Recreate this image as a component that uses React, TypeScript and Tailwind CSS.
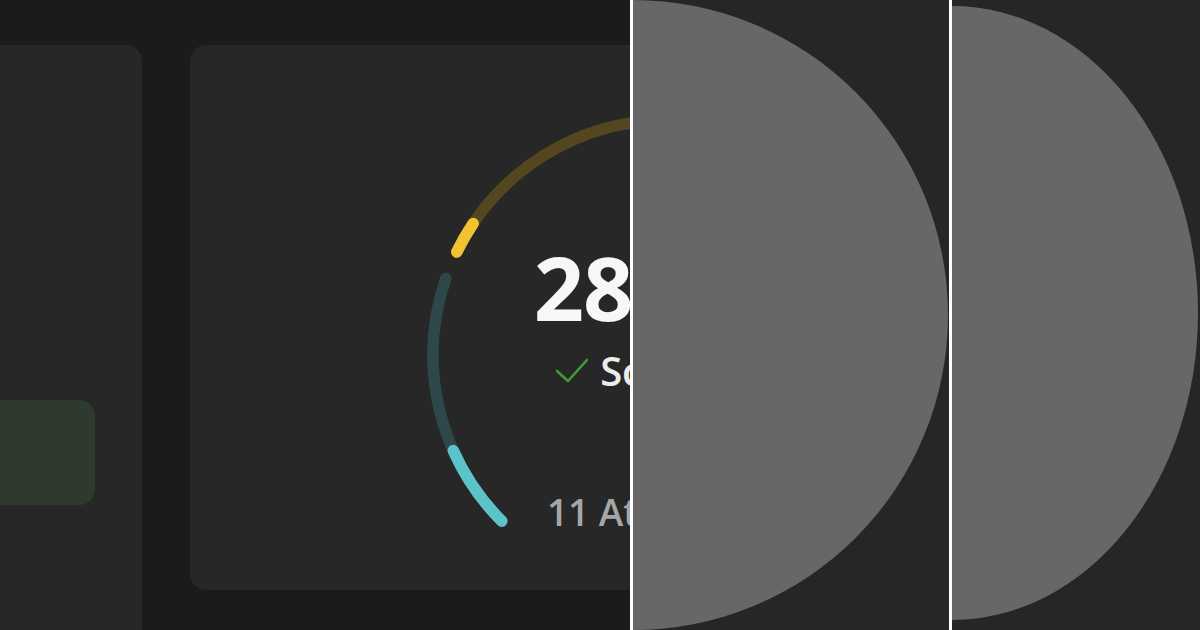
import React from 'react';

const CX = 245;
const CY = 245;
const R = 235;

// angle in degrees, clockwise from 12 o'clock
const pt = (deg: number) => {
  const a = (deg * Math.PI) / 180;
  return [CX + R * Math.sin(a), CY - R * Math.cos(a)];
};

const arc = (from: number, to: number) => {
  const [x1, y1] = pt(from);
  const [x2, y2] = pt(to);
  const large = to - from > 180 ? 1 : 0;
  return `M ${x1.toFixed(2)} ${y1.toFixed(2)} A ${R} ${R} 0 ${large} 1 ${x2.toFixed(2)} ${y2.toFixed(2)}`;
};

const SEGMENTS = [
  { from: -135, to: -71, value: -114, track: '#2e474b', fill: '#5cc3ca' },
  { from: -64, to: 64, value: -56, track: '#54461f', fill: '#f2c230' },
  { from: 71, to: 135, value: 80, track: '#4a2c2c', fill: '#e0605a' },
];

const Gauge: React.FC = () => (
  <div className="relative w-[490px] h-[490px]">
    <svg width="490" height="490" viewBox="0 0 490 490" className="absolute inset-0">
      {SEGMENTS.map((s, i) => (
        <g key={i}>
          <path d={arc(s.from, s.to)} fill="none" stroke={s.track} strokeWidth={11.5} strokeLinecap="round" />
          <path d={arc(s.from, s.value)} fill="none" stroke={s.fill} strokeWidth={11.5} strokeLinecap="round" />
        </g>
      ))}
    </svg>

    <div className="absolute inset-0 flex flex-col items-center pt-[133px] font-['Open_Sans',sans-serif]">
      <div className="pl-[20px] text-[88px] leading-none font-bold text-[#f7f7f7] tracking-[-1px]">28 min</div>
      <div className="mt-[20px] pl-[20px] flex items-center gap-3">
        <svg width="32" height="26" viewBox="0 0 32 26" fill="none">
          <polyline points="1,13 12,23 31,2" stroke="#3f9b3a" strokeWidth="2.6" strokeLinecap="round" strokeLinejoin="round" />
        </svg>
        <span className="text-[40px] leading-none font-semibold text-[#ececec]">Scheduled</span>
      </div>
      <div className="mt-[102px] pr-[8px] text-[37px] leading-none font-semibold text-[#a6a6a6]">11 Attendees</div>
    </div>
  </div>
);

export default function App() {
  return (
    <div className="relative w-[1200px] h-[630px] overflow-hidden bg-[#1b1b1b] flex items-start gap-12 pt-[45px] font-['Open_Sans',sans-serif]">
      {/* side card, cut by the left edge */}
      <div className="ml-[-160px] w-[302px] h-[620px] shrink-0 rounded-2xl bg-[#272727] px-[47px] pt-[355px]">
        <button className="w-full h-[105px] rounded-2xl bg-[#2f3a2e]" />
      </div>

      {/* main gauge card */}
      <div className="w-[956px] h-[545px] shrink-0 rounded-2xl bg-[#272727] flex justify-center pt-[65px]">
        <Gauge />
      </div>

      {/* comparison overlay */}
      <div className="absolute top-0 bottom-0 left-[630px] right-0 flex">
        <div className="w-[3px] bg-white" />
        <div className="relative w-[316px] overflow-hidden bg-[#262626]">
          <div className="absolute left-[-315px] top-0 w-[630px] h-[630px] rounded-[50%] bg-[#676767]" />
        </div>
        <div className="w-[3px] bg-white" />
        <div className="relative flex-1 overflow-hidden bg-[#262626]">
          <div className="absolute left-[-246px] top-[6px] w-[492px] h-[614px] rounded-[50%] bg-[#676767]" />
        </div>
      </div>
    </div>
  );
}
